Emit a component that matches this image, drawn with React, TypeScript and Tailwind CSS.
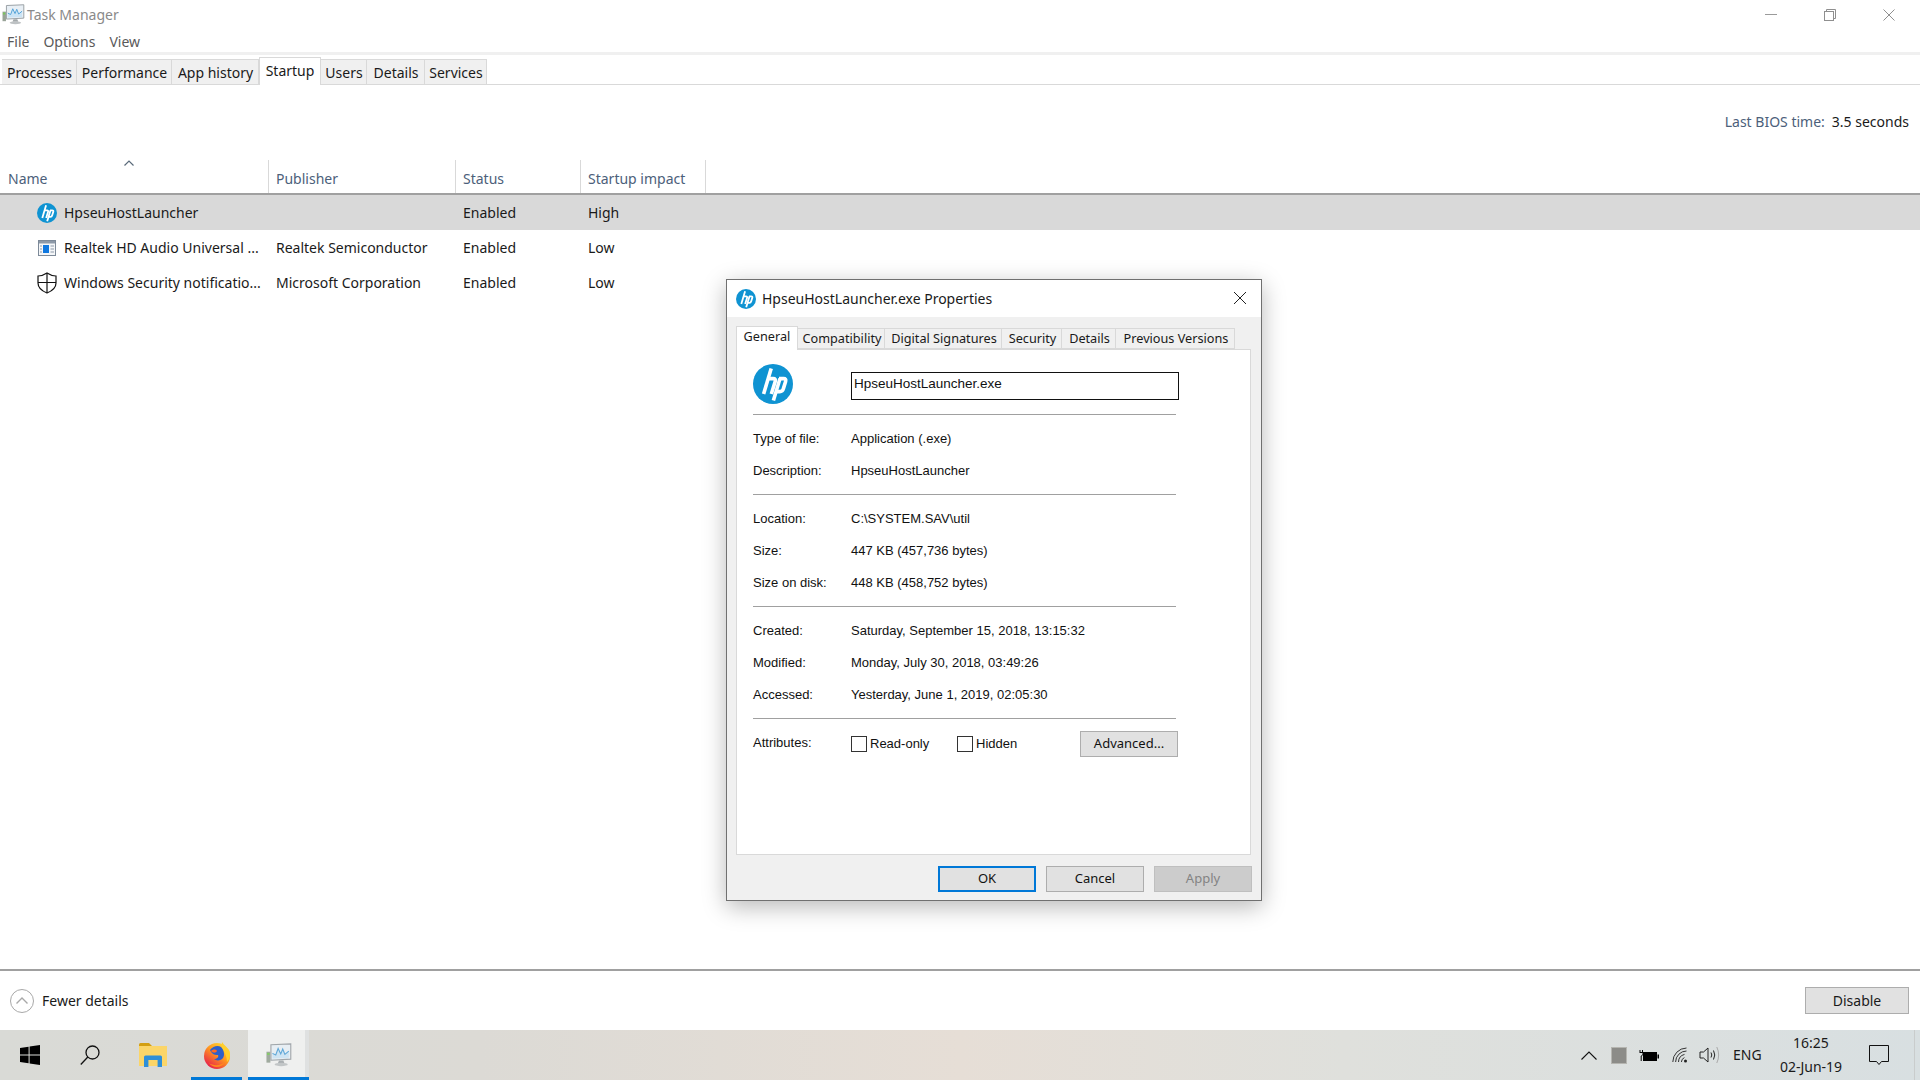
import React from 'react';

const TM_TABS = [
  { label: 'Processes', w: 'w-[75px]' },
  { label: 'Performance', w: 'w-[95px]' },
  { label: 'App history', w: 'w-[87px]' },
  { label: 'Startup', w: 'w-[62px]', active: true },
  { label: 'Users', w: 'w-[46px]' },
  { label: 'Details', w: 'w-[58px]' },
  { label: 'Services', w: 'w-[62px]' },
];

const DLG_TABS = [
  { label: 'Compatibility', w: 'w-[87px]' },
  { label: 'Digital Signatures', w: 'w-[117px]' },
  { label: 'Security', w: 'w-[60px]' },
  { label: 'Details', w: 'w-[54px]' },
  { label: 'Previous Versions', w: 'w-[119px]' },
];

function HpLogo({ className }: { className: string }) {
  return (
    <svg viewBox="0 0 40 40" className={className}>
      <circle cx="20" cy="20" r="20" fill="#0f93d2" />
      <g fill="none" stroke="#fff" strokeWidth="3.6">
        <path d="M18.2 4.5 L10.6 30" />
        <path d="M14.6 14.6 H20.2 Q23 14.6 22.2 17.4 L18.3 30" />
        <path d="M27 14.6 L20.4 36.5" />
        <path d="M26 14.6 H30.6 Q33.4 14.6 32.6 17.4 L30.4 24.6 Q29.6 27.6 26.8 27.6 H23.2" />
      </g>
    </svg>
  );
}

function MonitorIcon({ className }: { className: string }) {
  return (
    <svg viewBox="0 0 24 22" className={className}>
      <rect x="0.5" y="8" width="3.6" height="10" fill="#8d9a8c" />
      <rect x="1" y="9" width="2.4" height="2" fill="#6cc04a" />
      <path d="M4.6 1.6 L22.8 0.8 V14.8 L4.6 15.8 Z" fill="#e6eef4" stroke="#8d9499" strokeWidth="1" />
      <path d="M6 9.5 L9 11 L11.2 5 L13.6 10 L15.4 5.5 L17.4 10.5 L21 7.5 V13.5 L6 14.2 Z" fill="#c6e2f5" />
      <path d="M6 9.5 L9 11 L11.2 5 L13.6 10 L15.4 5.5 L17.4 10.5 L21 7.5" fill="none" stroke="#3e97d3" strokeWidth="1" />
      <path d="M12 16 H16 L17 18.5 H11 Z" fill="#9aa0a3" />
      <ellipse cx="14" cy="19.6" rx="6" ry="1.6" fill="#b8bcbe" />
    </svg>
  );
}

function FirefoxIcon({ className }: { className: string }) {
  return (
    <svg viewBox="0 0 28 28" className={className}>
      <defs>
        <linearGradient id="ffOuter" x1="0.8" y1="0.1" x2="0.2" y2="0.9">
          <stop offset="0" stopColor="#ffd22f" />
          <stop offset="0.45" stopColor="#ff9520" />
          <stop offset="1" stopColor="#e8264a" />
        </linearGradient>
      </defs>
      <circle cx="14" cy="15" r="13" fill="url(#ffOuter)" />
      <path d="M19 1 C21 4 23 6 26 9 C28 13 27 18 24 21 C24 16 22 11 19 8 C19 6 18.6 3 19 1 Z" fill="#ffcf2e" />
      <path d="M7 9 C10 5 15 4 18 6 C21 9 22 14 20 17 C18 20 13 20 11 18 C14 18 16 16 15 14 C13 14 11 14 9 12 C8 11 7.5 10 7 9 Z" fill="#2d5fc9" />
      <path d="M8 10 C10 8 13 8 14 10 C13 12 10 12.5 8 10 Z" fill="#ff6a24" />
      <path d="M6 22 C10 25 18 25 22 21 C19 27 10 28 6 22 Z" fill="#ff8a1e" />
    </svg>
  );
}

function FolderIcon({ className }: { className: string }) {
  return (
    <svg viewBox="0 0 28 24" className={className}>
      <path d="M0 1.5 Q0 0 1.5 0 H10 L13 3 V5 H0 Z" fill="#d39f12" />
      <rect x="0" y="3" width="28" height="20" fill="#fbd568" />
      <path d="M5 24 V14 Q5 12.5 6.5 12.5 H21.5 Q23 12.5 23 14 V24 H18.6 V17 H9.4 V24 Z" fill="#2f8fd8" />
    </svg>
  );
}

function InfoRow({ label, value }: { label: string; value: string }) {
  return (
    <div className="flex h-[32px] items-center pt-[2px]">
      <span className="w-[98px]">{label}</span>
      <span>{value}</span>
    </div>
  );
}

function DlgButton({ label, className }: { label: string; className: string }) {
  return (
    <div className={`flex h-[26px] w-[98px] items-center justify-center font-['Noto_Sans',sans-serif] text-[13px] ${className}`}>
      {label}
    </div>
  );
}

function PropertiesDialog() {
  return (
    <div className="absolute left-[726px] top-[279px] flex h-[622px] w-[536px] flex-col border border-[#707070] bg-[#f0f0f0] shadow-[0_6px_22px_rgba(0,0,0,0.28)]">
      <div className="flex h-[37px] shrink-0 items-center bg-white pl-[9px] pr-[14px]">
        <HpLogo className="h-[20px] w-[20px]" />
        <span className="ml-[6px] font-['Noto_Sans',sans-serif] text-[14px] text-[#1a1a1a]">HpseuHostLauncher.exe Properties</span>
        <svg viewBox="0 0 14 14" className="-mt-[2px] ml-auto h-[14px] w-[14px]">
          <path d="M1 1 L13 13 M13 1 L1 13" stroke="#222" strokeWidth="1" fill="none" />
        </svg>
      </div>

      <div className="ml-[9px] mt-[9px] flex h-[23px] items-end font-['Noto_Sans',sans-serif] text-[12.7px] text-[#1a1a1a]">
        <div className="relative z-10 -mb-px flex h-[24px] w-[62px] items-center justify-center border border-b-0 border-[#d9d9d9] bg-white pb-[3px]">General</div>
        {DLG_TABS.map((t) => (
          <div key={t.label} className={`flex h-[21px] items-center justify-center whitespace-nowrap border-b border-r border-t border-[#d9d9d9] bg-[#f0f0f0] pl-[2px] ${t.w}`}>
            {t.label}
          </div>
        ))}
      </div>

      <div className="ml-[9px] h-[506px] w-[515px] border border-[#d9d9d9] bg-white pl-[16px] pt-[14px] font-['Liberation_Sans',sans-serif] text-[13px] text-[#111]">
        <div className="flex h-[40px] items-center">
          <HpLogo className="h-[40px] w-[40px]" />
          <div className="ml-[58px] mt-[4px] flex h-[28px] w-[328px] items-start border border-[#111] pl-[2px] pt-[1px] text-[13.5px]">HpseuHostLauncher.exe</div>
        </div>
        <div className="mt-[10px] h-px w-[423px] bg-[#a0a0a0]" />
        <div className="mt-[7px]">
          <InfoRow label="Type of file:" value="Application (.exe)" />
          <InfoRow label="Description:" value="HpseuHostLauncher" />
        </div>
        <div className="mt-[8px] h-px w-[423px] bg-[#a0a0a0]" />
        <div className="mt-[7px]">
          <InfoRow label="Location:" value="C:\SYSTEM.SAV\util" />
          <InfoRow label="Size:" value="447 KB (457,736 bytes)" />
          <InfoRow label="Size on disk:" value="448 KB (458,752 bytes)" />
        </div>
        <div className="mt-[8px] h-px w-[423px] bg-[#a0a0a0]" />
        <div className="mt-[7px]">
          <InfoRow label="Created:" value="Saturday, September 15, 2018, 13:15:32" />
          <InfoRow label="Modified:" value="Monday, July 30, 2018, 03:49:26" />
          <InfoRow label="Accessed:" value="Yesterday, June 1, 2019, 02:05:30" />
        </div>
        <div className="mt-[8px] h-px w-[423px] bg-[#a0a0a0]" />
        <div className="mt-[12px] flex h-[26px] items-center">
          <span className="-mt-[3px] w-[98px]">Attributes:</span>
          <div className="h-[16px] w-[16px] border border-[#333]" />
          <span className="ml-[3px] w-[87px]">Read-only</span>
          <div className="h-[16px] w-[16px] border border-[#333]" />
          <span className="ml-[3px] w-[104px]">Hidden</span>
          <div className="flex h-[26px] w-[98px] items-center justify-center border border-[#adadad] bg-[#e1e1e1] font-['Noto_Sans',sans-serif]">Advanced...</div>
        </div>
      </div>

      <div className="mr-[9px] mt-[11px] flex justify-end gap-[10px]">
        <DlgButton label="OK" className="border-2 border-[#0078d7] bg-[#e1e1e1] text-[#111]" />
        <DlgButton label="Cancel" className="border border-[#adadad] bg-[#e1e1e1] text-[#111]" />
        <DlgButton label="Apply" className="border border-[#bfbfbf] bg-[#cccccc] text-[#838383]" />
      </div>
    </div>
  );
}

function StartupRow({ icon, name, publisher, impact, selected }: { icon: React.ReactNode; name: string; publisher: string; impact: string; selected?: boolean }) {
  return (
    <div className={`flex h-[35px] items-center text-[#1a1a1a] ${selected ? 'bg-[#d9d9d9]' : ''}`}>
      <div className="flex w-[268px] items-center">
        <div className="ml-[37px] flex w-[27px] shrink-0 items-center">{icon}</div>
        <span className="whitespace-nowrap">{name}</span>
      </div>
      <div className="w-[187px] whitespace-nowrap pl-[8px]">{publisher}</div>
      <div className="w-[125px] pl-[8px]">Enabled</div>
      <div className="w-[125px] pl-[8px]">{impact}</div>
    </div>
  );
}

function Taskbar() {
  return (
    <div className="flex h-[50px] shrink-0 items-center bg-[linear-gradient(90deg,#d9dad6_0%,#dcdad5_25%,#e6ded6_50%,#dfe0dc_70%,#d8dfe1_100%)] pr-[5px]">
      <div className="flex h-full w-[60px] items-center justify-center">
        <svg viewBox="0 0 20 20" className="h-[20px] w-[20px]">
          <path d="M0 3 L8.6 1.7 V9.4 H0 Z M9.6 1.5 L20 0 V9.4 H9.6 Z M0 10.5 H8.6 V18.3 L0 17 Z M9.6 10.5 H20 V20 L9.6 18.5 Z" fill="#000" />
        </svg>
      </div>
      <div className="flex h-full w-[60px] items-center justify-center">
        <svg viewBox="0 0 20 20" className="h-[20px] w-[20px]" fill="none" stroke="#111" strokeWidth="1.3">
          <circle cx="12.5" cy="7.5" r="6.5" />
          <path d="M7.8 12 L0.8 19.5" />
        </svg>
      </div>
      <div className="ml-[3px] flex h-full w-[60px] items-center justify-center">
        <FolderIcon className="h-[24px] w-[28px]" />
      </div>
      <div className="ml-[8px] flex h-full w-[51px] items-center justify-center border-b-[3px] border-[#0078d7] pt-[3px]">
        <FirefoxIcon className="h-[28px] w-[28px]" />
      </div>
      <div className="ml-[6px] flex h-full w-[61px] items-center justify-center border-b-[3px] border-[#0078d7] bg-[linear-gradient(90deg,#eff0ef_93%,#dfe1e1_93%)] pt-[3px]">
        <MonitorIcon className="h-[24px] w-[28px] opacity-80" />
      </div>

      <div className="ml-auto flex h-full items-center">
        <svg viewBox="0 0 16 9" className="h-[9px] w-[16px]" fill="none" stroke="#111" strokeWidth="1.1">
          <path d="M0.5 8.5 L8 1 L15.5 8.5" />
        </svg>
        <div className="ml-[14px] h-[17px] w-[16px] border border-[#b5b5b0] bg-[#8c8c88]" />
        <svg viewBox="0 0 20 13" className="ml-[12px] h-[13px] w-[20px]">
          <rect x="4.5" y="3.5" width="13" height="8" fill="#000" stroke="#000" />
          <rect x="18.5" y="5.5" width="1.5" height="4" fill="#000" />
          <path d="M1 1 V3 M3.5 1 V3 M0.5 3.5 H4 V5.5 L2.2 7 V12" fill="none" stroke="#000" strokeWidth="1" />
        </svg>
        <svg viewBox="0 0 16 16" className="ml-[13px] h-[16px] w-[16px]" fill="none" stroke="#333" strokeWidth="1">
          <path d="M0.8 15 A14 14 0 0 1 14.5 1" />
          <path d="M3.6 15 A11 11 0 0 1 14.5 4" />
          <path d="M6.5 15 A8 8 0 0 1 12.5 7.4" />
          <path d="M9.4 15 A5 5 0 0 1 12.4 10.6" />
          <circle cx="13.5" cy="14" r="1.5" fill="#222" stroke="none" />
        </svg>
        <svg viewBox="0 0 21 18" className="ml-[11px] h-[18px] w-[21px]" fill="none" stroke="#222" strokeWidth="1">
          <path d="M1 6 H4.5 L9 2 V16 L4.5 12 H1 Z" />
          <path d="M12 6.5 Q13.6 9 12 11.5" />
          <path d="M14.5 4.5 Q17 9 14.5 13.5" />
          <path d="M17.8 1 Q21.5 9 17.8 17" stroke="#aaa" />
        </svg>
        <span className="ml-[13px] w-[28px] text-[14px] leading-none text-[#1a1a1a]">ENG</span>
        <div className="ml-[16px] flex w-[68px] flex-col items-center text-[14px] leading-[24px] text-[#1a1a1a]">
          <span>16:25</span>
          <span className="whitespace-nowrap">02-Jun-19</span>
        </div>
        <svg viewBox="0 0 20 21" className="ml-[24px] h-[21px] w-[20px]" fill="none" stroke="#111" strokeWidth="1">
          <path d="M0.5 0.5 H19.5 V16.5 H12.5 L10 19.5 L7.5 16.5 H0.5 Z" />
        </svg>
        <div className="ml-[25px] h-full w-px bg-[#c9cccc]" />
      </div>
    </div>
  );
}

export default function App() {
  return (
    <div className="relative flex h-[1080px] w-[1920px] flex-col overflow-hidden bg-white font-['Noto_Sans',sans-serif] text-[14px]">
      <div className="flex h-[29px] shrink-0 items-center">
        <MonitorIcon className="ml-[2px] h-[21px] w-[23px] opacity-90" />
        <span className="ml-[2px] text-[#8a8a8a]">Task Manager</span>
        <div className="ml-auto flex items-center">
          <svg viewBox="0 0 12 1" className="h-px w-[12px]"><rect width="12" height="1" fill="#9a9a9a" /></svg>
          <svg viewBox="0 0 12 12" className="ml-[47px] h-[12px] w-[12px]" fill="none" stroke="#8f8f8f" strokeWidth="1">
            <rect x="0.5" y="2.5" width="9" height="9" />
            <path d="M2.5 2.5 V0.5 H11.5 V9.5 H9.5" />
          </svg>
          <svg viewBox="0 0 12 12" className="ml-[47px] mr-[25px] h-[12px] w-[12px]" fill="none" stroke="#8f8f8f" strokeWidth="1">
            <path d="M0.5 0.5 L11.5 11.5 M11.5 0.5 L0.5 11.5" />
          </svg>
        </div>
      </div>

      <div className="flex h-[23px] shrink-0 items-center gap-[14px] pl-[7px] pt-[2px] text-[#5a5a5a]">
        <span>File</span>
        <span>Options</span>
        <span>View</span>
      </div>
      <div className="h-[3px] shrink-0 bg-[#f0f0f0]" />

      <div className="flex h-[63px] shrink-0 flex-col pt-[2px]">
        <div className="flex h-[28px] shrink-0 items-end border-b border-[#d9d9d9] pl-[2px] text-[#1a1a1a]">
          {TM_TABS.map((t) =>
            t.active ? (
              <div key={t.label} className={`relative -mb-px flex h-[28px] items-center justify-center border border-b-0 border-[#d9d9d9] bg-white pb-[3px] ${t.w}`}>
                {t.label}
              </div>
            ) : (
              <div key={t.label} className={`flex h-[25px] items-center justify-center border-r border-t border-[#d9d9d9] bg-[#f0f0f0] pl-[1px] ${t.w}`}>
                {t.label}
              </div>
            ),
          )}
        </div>
        <div className="flex justify-end pr-[11px] pt-[26px]">
          <span className="text-[#4c607a]">Last BIOS time:</span>
          <span className="ml-[7px] text-[#1a1a1a]">3.5 seconds</span>
        </div>
      </div>

      <div className="mt-[42px] flex h-[35px] shrink-0 items-end border-b-2 border-[#a0a0a0] text-[#4c607a]">
        <div className="relative flex h-full w-[269px] items-end border-r border-[#d9d9d9] pb-[4px] pl-[8px]">
          Name
          <svg viewBox="0 0 10 6" className="absolute left-[124px] top-0 h-[6px] w-[10px]" fill="none" stroke="#5a6a7a" strokeWidth="1.2">
            <path d="M0.5 5.5 L5 1 L9.5 5.5" />
          </svg>
        </div>
        <div className="flex h-full w-[187px] items-end border-r border-[#d9d9d9] pb-[4px] pl-[7px]">Publisher</div>
        <div className="flex h-full w-[125px] items-end border-r border-[#d9d9d9] pb-[4px] pl-[7px]">Status</div>
        <div className="flex h-full w-[125px] items-end border-r border-[#d9d9d9] pb-[4px] pl-[7px]">Startup impact</div>
      </div>

      <div className="min-h-0 flex-1">
        <StartupRow selected name="HpseuHostLauncher" publisher="" impact="High" icon={<HpLogo className="h-[20px] w-[20px]" />} />
        <StartupRow
          name="Realtek HD Audio Universal ..."
          publisher="Realtek Semiconductor"
          impact="Low"
          icon={
            <svg viewBox="0 0 18 16" className="ml-[1px] h-[16px] w-[18px]">
              <rect x="0.5" y="0.5" width="17" height="15" fill="#f4f6f8" stroke="#7d8a99" />
              <rect x="1" y="1" width="16" height="2.5" fill="#8d99a8" />
              <rect x="5" y="5" width="6" height="8" fill="#0f78e0" />
              <path d="M2 6 H4 M2 9 H4 M2 12 H4 M12.5 6 H16 M12.5 9 H16 M12.5 12 H16" stroke="#8d99a8" />
            </svg>
          }
        />
        <StartupRow
          name="Windows Security notificatio..."
          publisher="Microsoft Corporation"
          impact="Low"
          icon={
            <svg viewBox="0 0 20 22" className="h-[22px] w-[20px]" fill="none" stroke="#111" strokeWidth="1.2">
              <path d="M10 1 C7 3 4 4 1 4 V11 C1 16 5 19 10 21 C15 19 19 16 19 11 V4 C16 4 13 3 10 1 Z" />
              <path d="M10 1 V21 M1 10.5 H19" />
            </svg>
          }
        />
      </div>

      <div className="flex h-[61px] shrink-0 items-center border-t-2 border-[#a0a0a0] pl-[10px] pr-[11px]">
        <svg viewBox="0 0 24 24" className="h-[24px] w-[24px]" fill="none">
          <circle cx="12" cy="12" r="11.5" stroke="#a8a8a8" />
          <path d="M6.5 14.5 L12 9 L17.5 14.5" stroke="#a8a8a8" strokeWidth="1.4" />
        </svg>
        <span className="ml-[8px] text-[#1a1a1a]">Fewer details</span>
        <div className="ml-auto flex h-[27px] w-[104px] items-center justify-center border border-[#adadad] bg-[#e1e1e1] pb-[1px] text-[#1a1a1a]">Disable</div>
      </div>

      <Taskbar />
      <PropertiesDialog />
    </div>
  );
}
